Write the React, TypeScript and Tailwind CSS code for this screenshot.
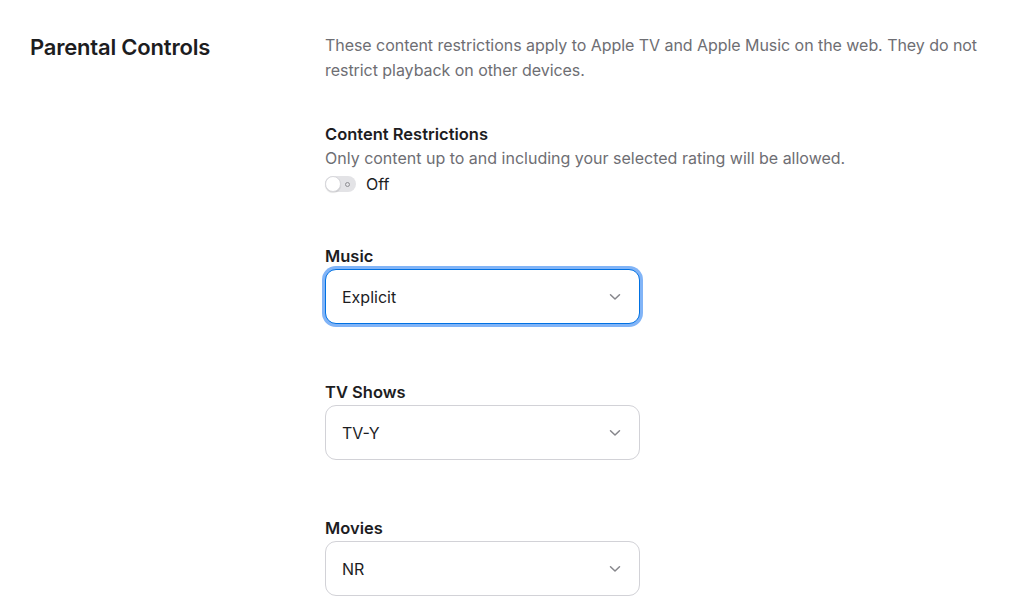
import React from 'react';

const Chevron = () => (
  <svg width="12" height="8" viewBox="0 0 12 8" fill="none" className="shrink-0">
    <path d="M1.5 1.75 L6 6 L10.5 1.75" stroke="#86868b" strokeWidth="1.5" strokeLinecap="round" strokeLinejoin="round" />
  </svg>
);

interface RatingSelectProps {
  label: string;
  value: string;
  focused?: boolean;
}

const RatingSelect: React.FC<RatingSelectProps> = ({ label, value, focused }) => (
  <div className="flex flex-col">
    <div className="text-[16.5px] leading-[24px] font-semibold text-[#1d1d1f]">{label}</div>
    <div
      className={`mt-px w-[315px] h-[55px] rounded-[11px] bg-white flex items-center justify-between pl-[16px] pr-[18px] ${
        focused
          ? 'border border-[#0071e3] ring-[3px] ring-[#81b4f7]'
          : 'border border-[#d2d2d7]'
      }`}
    >
      <span className="text-[16px] text-[#1d1d1f]">{value}</span>
      <Chevron />
    </div>
  </div>
);

export default function App() {
  return (
    <div className="min-h-[613px] w-[1024px] bg-white font-['Inter',sans-serif] antialiased">
      <div className="flex pt-[33px]">
        {/* left column */}
        <div className="w-[325px] shrink-0 pl-[30px]">
          <h1 className="text-[22px] leading-[28px] font-semibold text-[#1d1d1f] tracking-[-0.2px]">
            Parental Controls
          </h1>
        </div>

        {/* right column */}
        <div className="flex flex-col w-[670px]">
          <p className="text-[16px] leading-[25px] text-[#6e6e73] tracking-[-0.05px]">
            These content restrictions apply to Apple TV and Apple Music on the web. They do not restrict playback on other devices.
          </p>

          <div className="mt-[39px] flex flex-col">
            <div className="text-[16.5px] leading-[24px] font-semibold text-[#1d1d1f]">Content Restrictions</div>
            <div className="text-[16px] leading-[24px] text-[#6e6e73]">
              Only content up to and including your selected rating will be allowed.
            </div>
            <div className="mt-[2px] flex items-center gap-[10px] h-[24px]">
              <div className="relative w-[31px] h-[16px] rounded-full bg-[#e3e3e6]">
                <div className="absolute left-0 top-0 w-[16px] h-[16px] rounded-full bg-white border border-[#d8d8dc] shadow-[0_1px_1px_rgba(0,0,0,0.12)]" />
                <div className="absolute right-[6px] top-[5.5px] w-[5px] h-[5px] rounded-full border border-[#8e8e93]" />
              </div>
              <span className="text-[16px] text-[#1d1d1f]">Off</span>
            </div>
          </div>

          <div className="mt-[48px] flex flex-col gap-[56px]">
            <RatingSelect label="Music" value="Explicit" focused />
            <RatingSelect label="TV Shows" value="TV-Y" />
            <RatingSelect label="Movies" value="NR" />
          </div>
        </div>
      </div>
    </div>
  );
}
